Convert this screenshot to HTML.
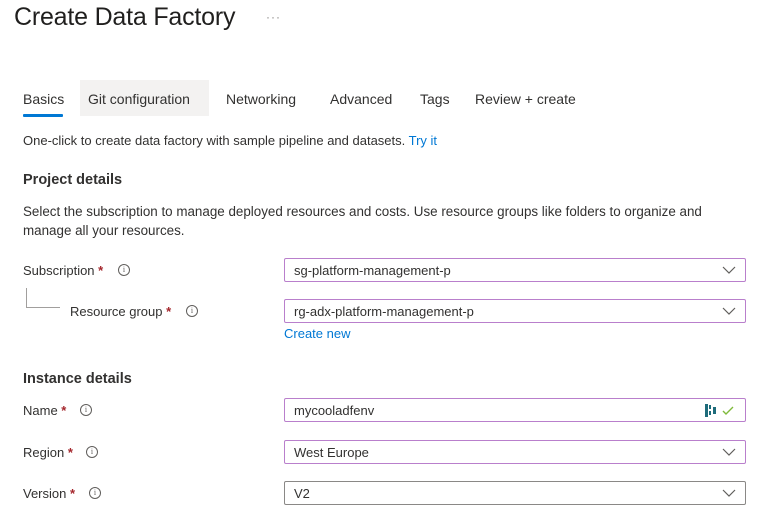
<!DOCTYPE html>
<html><head><meta charset="utf-8"><style>
*{margin:0;padding:0;box-sizing:border-box}
body{width:768px;height:525px;background:#fff;font-family:"Liberation Sans",sans-serif;color:#323130;position:relative;overflow:hidden;font-size:13px}
.a{position:absolute;white-space:nowrap}
h1{position:absolute;left:14px;top:3px;font-size:25px;font-weight:normal;color:#201f1e;letter-spacing:-0.2px}
.tab{position:absolute;top:91px;font-size:14px;color:#323130}
.gitbg{position:absolute;left:80px;top:80px;width:129px;height:36px;background:#f3f2f1}
.ul{position:absolute;left:23px;top:114px;width:40px;height:3px;background:#0078d4;border-radius:1px}
.h2{font-size:14.5px;font-weight:bold;color:#323130}
.star{color:#a4262c;font-weight:bold}
.info{position:absolute;width:12px;height:12px;border:1px solid #605e5c;border-radius:50%;font-size:8px;line-height:10px;text-align:center;color:#605e5c;font-family:"Liberation Serif",serif}
.box{position:absolute;left:284px;width:462px;height:24px;border:1px solid #b97fcc;border-radius:2px;padding-left:9px;line-height:23px;font-size:13px;color:#323130}
.chev{position:absolute;right:9px;top:7px}
</style></head><body>
<h1>Create Data Factory</h1>
<div class="a" style="left:266px;top:10px;color:#8a8886;font-size:12px;letter-spacing:1px">···</div>
<div class="gitbg"></div>
<div class="tab" style="left:23px">Basics</div>
<div class="tab" style="left:88px">Git configuration</div>
<div class="tab" style="left:226px">Networking</div>
<div class="tab" style="left:330px">Advanced</div>
<div class="tab" style="left:420px">Tags</div>
<div class="tab" style="left:475px">Review + create</div>
<div class="ul"></div>
<div class="a" style="left:23px;top:133px;font-size:13px">One-click to create data factory with sample pipeline and datasets. <span style="color:#0078d4">Try it</span></div>
<div class="a h2" style="left:23px;top:172px">Project details</div>
<div class="a" style="left:23px;top:202px;font-size:13.4px;line-height:19px">Select the subscription to manage deployed resources and costs. Use resource groups like folders to organize and<br>manage all your resources.</div>

<div class="a" style="left:23px;top:263px">Subscription <span class="star">*</span></div>
<div class="info" style="left:118px;top:264px">i</div>
<div class="a" style="left:26px;top:288px;width:1px;height:20px;background:#a19f9d"></div>
<div class="a" style="left:26px;top:307px;width:34px;height:1px;background:#a19f9d"></div>
<div class="a" style="left:70px;top:304px">Resource group <span class="star">*</span></div>
<div class="info" style="left:186px;top:305px">i</div>

<div class="box" style="top:258px">sg-platform-management-p<svg class="chev" width="14" height="8" viewBox="0 0 14 8"><path d="M1 1l6 6 6-6" fill="none" stroke="#605e5c" stroke-width="1.2"/></svg></div>
<div class="box" style="top:299px">rg-adx-platform-management-p<svg class="chev" width="14" height="8" viewBox="0 0 14 8"><path d="M1 1l6 6 6-6" fill="none" stroke="#605e5c" stroke-width="1.2"/></svg></div>
<div class="a" style="left:284px;top:326px;color:#0078d4">Create new</div>

<div class="a h2" style="left:23px;top:371px">Instance details</div>
<div class="a" style="left:23px;top:403px">Name <span class="star">*</span></div>
<div class="info" style="left:80px;top:404px">i</div>
<div class="a" style="left:23px;top:445px">Region <span class="star">*</span></div>
<div class="info" style="left:86px;top:446px">i</div>
<div class="a" style="left:23px;top:486px">Version <span class="star">*</span></div>
<div class="info" style="left:89px;top:487px">i</div>

<div class="box" style="top:398px">mycooladfenv<svg style="position:absolute;right:6px;top:5px" width="34" height="13" viewBox="0 0 34 13"><rect x="0" y="0" width="3" height="13" fill="#1e6c7b"/><rect x="4" y="1" width="2" height="4" fill="#1e6c7b"/><rect x="4" y="7" width="2" height="4" fill="#1e6c7b"/><rect x="8" y="3" width="3" height="7" fill="#1e6c7b"/><path d="M18 7l3 3 7-7" fill="none" stroke="#7fba3b" stroke-width="1.4"/></svg></div>
<div class="box" style="top:440px">West Europe<svg class="chev" width="14" height="8" viewBox="0 0 14 8"><path d="M1 1l6 6 6-6" fill="none" stroke="#605e5c" stroke-width="1.2"/></svg></div>
<div class="box" style="top:481px;border-color:#8a8886">V2<svg class="chev" width="14" height="8" viewBox="0 0 14 8"><path d="M1 1l6 6 6-6" fill="none" stroke="#605e5c" stroke-width="1.2"/></svg></div>
</body></html>
